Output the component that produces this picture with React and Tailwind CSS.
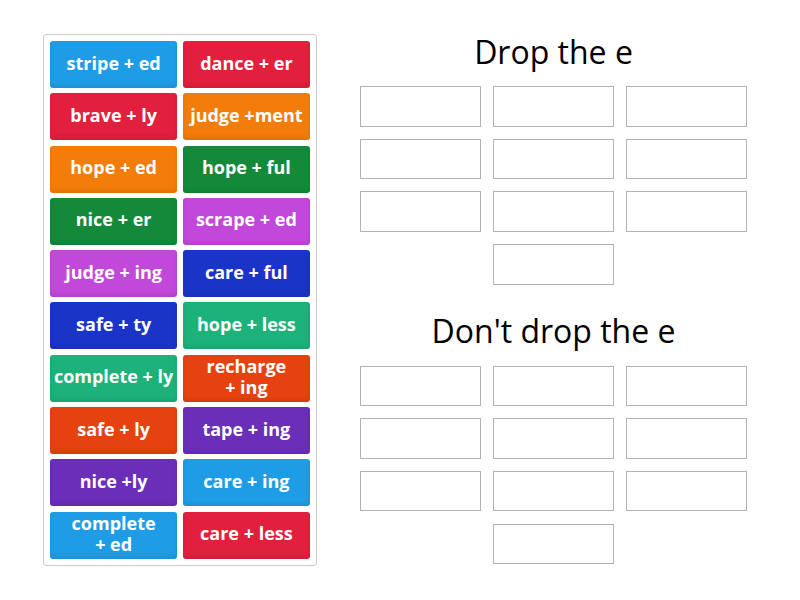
const tiles = [
  ["stripe + ed", "bg-[#1e9de6]"],
  ["dance + er", "bg-[#e21f3c]"],
  ["brave + ly", "bg-[#e21f3c]"],
  ["judge +ment", "bg-[#f47c08]"],
  ["hope + ed", "bg-[#f47c08]"],
  ["hope + ful", "bg-[#138a3a]"],
  ["nice + er", "bg-[#138a3a]"],
  ["scrape + ed", "bg-[#c248d9]"],
  ["judge + ing", "bg-[#c248d9]"],
  ["care + ful", "bg-[#1a34c8]"],
  ["safe + ty", "bg-[#1a34c8]"],
  ["hope + less", "bg-[#1db27a]"],
  ["complete + ly", "bg-[#1db27a]"],
  [["recharge", "+ ing"], "bg-[#e5420f]"],
  ["safe + ly", "bg-[#e5420f]"],
  ["tape + ing", "bg-[#6a2eb8]"],
  ["nice +ly", "bg-[#6a2eb8]"],
  ["care + ing", "bg-[#1e9de6]"],
  [["complete", "+ ed"], "bg-[#1e9de6]"],
  ["care + less", "bg-[#e21f3c]"],
];

const Tile = ({ text, color }) => (
  <div
    className={`${color} h-[47px] rounded-[3px] flex flex-col items-center justify-center pb-[3px] text-center text-white font-bold text-[18px] leading-[21px] whitespace-nowrap shadow-[inset_0_-3px_4px_rgba(0,0,0,0.08)]`}
  >
    {Array.isArray(text) ? text.map((t) => <span key={t}>{t}</span>) : text}
  </div>
);

const Boxes = () => (
  <div className="flex flex-col gap-y-[12.2px]">
    {[0, 1, 2].map((r) => (
      <div key={r} className="flex gap-x-[12.5px]">
        {[0, 1, 2].map((c) => (
          <div key={c} className="w-[121px] h-[40.5px] border border-[#b3b3b3]" />
        ))}
      </div>
    ))}
    <div className="flex justify-center">
      <div className="w-[121px] h-[40.5px] border border-[#b3b3b3]" />
    </div>
  </div>
);

const App = () => {
  return (
    <div className="w-[800px] h-[600px] bg-white flex items-start font-['Open_Sans',sans-serif]">
      <div className="ml-[43px] mt-[34px] w-[274px] h-[532px] border border-[#cccccc] rounded-[3px] px-[6px] pt-[6px]">
        <div className="grid grid-cols-2 gap-x-[5.5px] gap-y-[5.3px]">
          {tiles.map(([t, c], i) => (
            <Tile key={i} text={t} color={c} />
          ))}
        </div>
      </div>
      <div className="ml-[43px] mt-[31px] w-[387px] flex flex-col">
        <h2 className="text-[32px] leading-[42px] text-black text-center mb-[13px]">Drop the e</h2>
        <Boxes />
        <h2 className="text-[32px] leading-[42px] text-black text-center mt-[25px] mb-[14px]">Don't drop the e</h2>
        <Boxes />
      </div>
    </div>
  );
};

export default App;
